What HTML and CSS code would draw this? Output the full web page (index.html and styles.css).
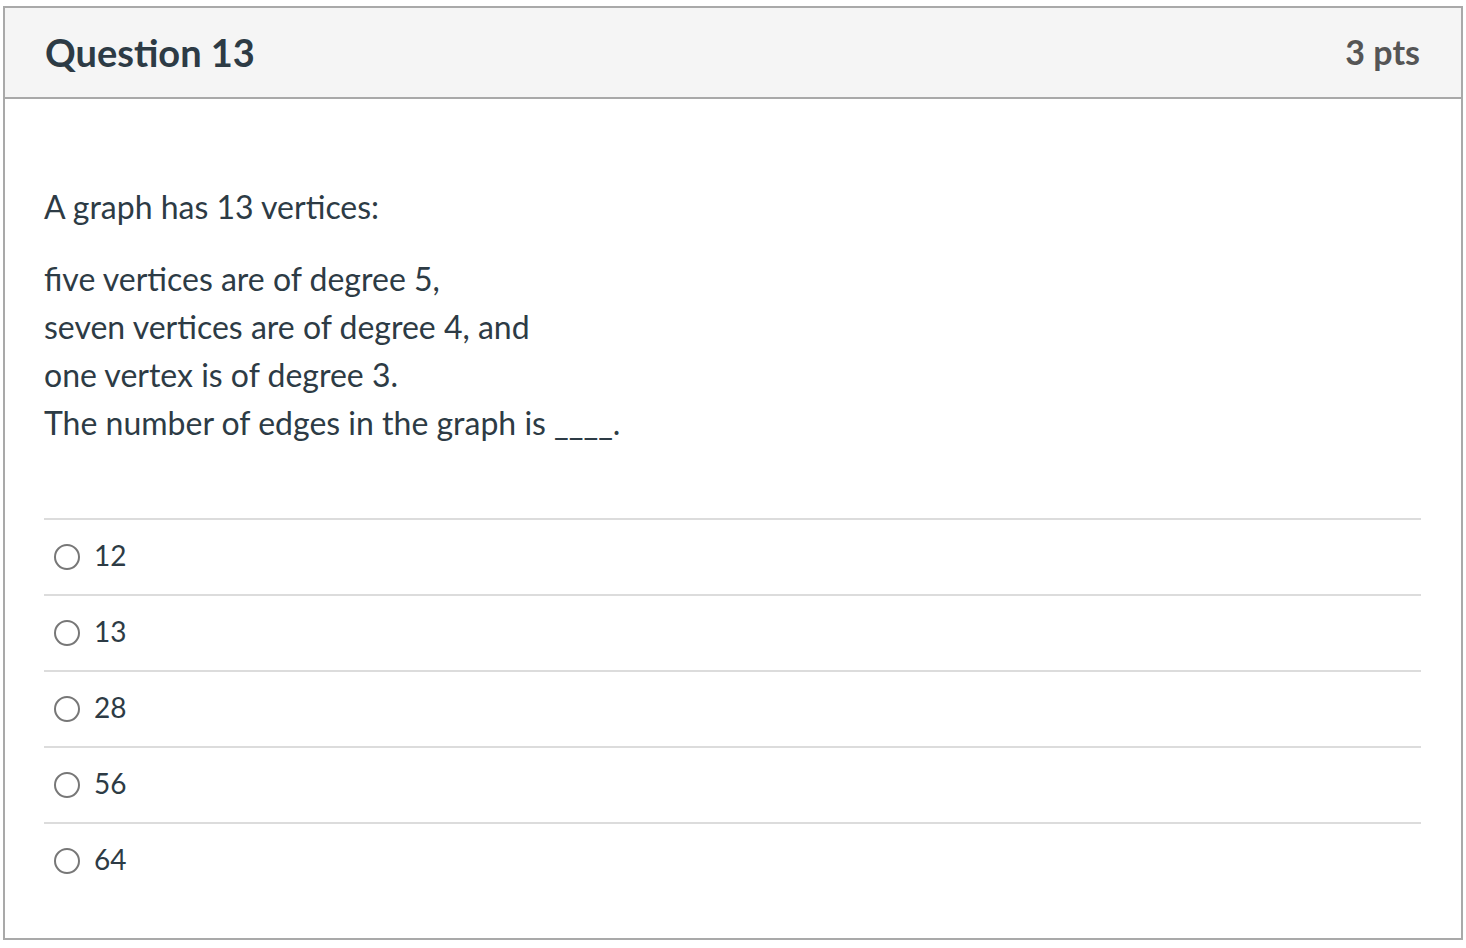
FILE: index.html
```html
<!DOCTYPE html>
<html>
<head>
<meta charset="utf-8">
<link rel="stylesheet" href="styles.css">
</head>
<body>
<div class="question">
  <div class="header">
    <h2 class="title">Question 13</h2>
    <div class="points">3 pts</div>
  </div>
  <div class="content">
    <div class="text">
      <p>A graph has 13 vertices:</p>
      <p>five vertices are of degree 5,<br>seven vertices are of degree 4, and<br>one vertex is of degree 3.<br>The number of edges in the graph is ____.</p>
    </div>
    <div class="answers">
      <label class="answer"><span class="radio"></span><span class="label">12</span></label>
      <label class="answer"><span class="radio"></span><span class="label">13</span></label>
      <label class="answer"><span class="radio"></span><span class="label">28</span></label>
      <label class="answer"><span class="radio"></span><span class="label">56</span></label>
      <label class="answer"><span class="radio"></span><span class="label">64</span></label>
    </div>
  </div>
</div>
</body>
</html>
```

FILE: styles.css
```css
html, body {
  margin: 0;
  padding: 0;
  background: #ffffff;
}
body {
  font-family: Lato, "Open Sans", sans-serif;
  color: #2d3b45;
}
.question {
  box-sizing: border-box;
  margin: 6px 0 0 3px;
  width: 1460px;
  height: 934px;
  border: 2px solid #a9a9a9;
}
.header {
  box-sizing: border-box;
  height: 91px;
  background: #f5f5f5;
  border-bottom: 2px solid #a9a9a9;
  display: flex;
  align-items: center;
  justify-content: space-between;
  padding: 0 41px 2px 40px;
}
.title {
  margin: 0;
  font-size: 38px;
  font-weight: 700;
  color: #2d3b45;
}
.points {
  font-size: 34px;
  font-weight: 700;
  color: #555555;
}
.content {
  padding: 84px 40px 0 39px;
}
.text {
  font-size: 32px;
  line-height: 48px;
}
.text p {
  margin: 0 0 24px 0;
}
.text p:last-child {
  margin-bottom: 0;
}
.answers {
  margin-top: 71px;
}
.answer {
  box-sizing: border-box;
  display: flex;
  align-items: center;
  height: 76px;
  border-top: 2px solid #dcdcdc;
  gap: 14px;
  padding: 0 0 4px 10px;
  font-size: 28px;
}
.radio {
  box-sizing: border-box;
  width: 26px;
  height: 26px;
  margin-top: 4px;
  border: 2px solid #777777;
  border-radius: 50%;
  background: #fff;
}
```
